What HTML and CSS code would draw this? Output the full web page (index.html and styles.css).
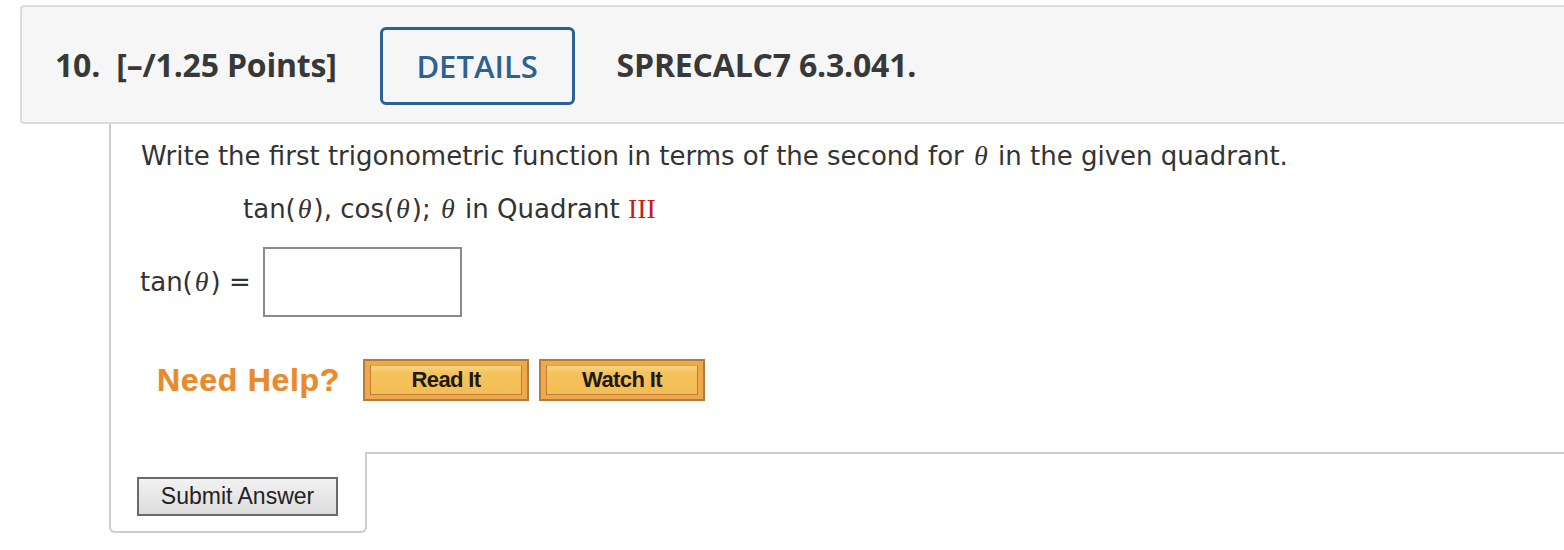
FILE: index.html
```html
<!DOCTYPE html>
<html>
<head>
<meta charset="utf-8">
<link rel="stylesheet" href="styles.css">
</head>
<body>
<div class="header">
  <span class="title">10.&nbsp; [–/1.25 Points]</span>
  <span class="details">DETAILS</span>
  <span class="code">SPRECALC7 6.3.041.</span>
</div>
<div class="content">
  <div class="body">
    <p class="question">Write the first trigonometric function in terms of the second for <i class="math">θ</i> in the given quadrant.</p>
    <p class="given">tan(<i class="math">θ</i>), cos(<i class="math">θ</i>); <i class="math">θ</i> in Quadrant <span class="roman">III</span></p>
    <div class="answer">
      <span class="label">tan(<i class="math">θ</i>) <span class="eq">=</span></span>
      <span class="input"></span>
    </div>
    <div class="help">
      <span class="need">Need Help?</span>
      <span class="hbtn"><span class="hin">Read It</span></span>
      <span class="hbtn"><span class="hin">Watch It</span></span>
    </div>
  </div>
  <div class="footer">
    <div class="submit-cell"><span class="submit">Submit Answer</span></div>
    <div class="rest"></div>
  </div>
</div>
</body>
</html>
```
FILE: styles.css
```css
html, body {
  margin: 0;
  padding: 0;
  background: #fff;
}
body {
  font-family: "Open Sans", "Noto Sans", sans-serif;
  color: #333;
  overflow: hidden;
}
.header {
  margin: 5px 0 0 20px;
  box-sizing: border-box;
  height: 119px;
  border: 2px solid #dcdcdc;
  border-right: none;
  border-radius: 4px 0 0 4px;
  background: #f6f6f6;
  display: flex;
  align-items: center;
  padding-left: 33px;
}
.title {
  font-size: 32px;
  font-weight: 700;
  color: #383838;
  letter-spacing: -0.2px;
}
.details {
  margin-left: 43px;
  width: 195px;
  height: 78px;
  box-sizing: border-box;
  border: 3px solid #2c6195;
  border-radius: 6px;
  display: flex;
  align-items: center;
  justify-content: center;
  font-size: 31px;
  font-weight: 600;
  color: #2c6195;
  background: #f6f6f6;
  margin-top: 2px;
}
.code {
  margin-left: 42px;
  font-size: 32px;
  font-weight: 700;
  color: #383838;
  letter-spacing: -0.2px;
}
.content {
  margin-left: 109px;
}
.body {
  border-left: 2px solid #cccccc;
  padding: 12px 0 51px 30px;
  font-family: "DejaVu Sans", Verdana, sans-serif;
}
p {
  margin: 0;
}
.question {
  font-size: 26px;
  line-height: 40px;
}
.given {
  font-size: 26px;
  line-height: 40px;
  margin-top: 13px;
  padding-left: 102px;
}
.math {
  font-family: "Liberation Serif", "DejaVu Serif", serif;
  font-style: italic;
  font-size: 28px;
  padding: 0 2px;
}
.roman {
  font-family: "Liberation Serif", "DejaVu Serif", serif;
  color: #cc1a1a;
  font-size: 28px;
}
.answer {
  display: flex;
  align-items: center;
  margin-top: 18px;
  font-size: 26px;
}
.answer .label {
  margin-left: -1px;
}
.input {
  width: 199px;
  height: 70px;
  box-sizing: border-box;
  border: 2px solid #8a8a8a;
  background: #fff;
  margin-left: 12px;
}
.help {
  display: flex;
  align-items: center;
  margin-top: 42px;
  padding-left: 16px;
}
.need {
  font-family: "Liberation Sans", Arial, sans-serif;
  font-weight: 700;
  font-size: 32px;
  color: #e88a2e;
  text-shadow: 0 0 1px rgba(232, 138, 46, 0.6);
  margin-right: 23px;
  letter-spacing: 0.7px;
}
.hbtn {
  width: 166px;
  height: 42px;
  box-sizing: border-box;
  border: 2px solid #b57a3c;
  background: #f0a94a;
  padding: 4px 5px;
  margin-right: 10px;
  display: flex;
}
.hin {
  flex: 1;
  border: 1px solid #c07e3a;
  border-top-color: #d5a060;
  background: linear-gradient(#f8d585 0%, #f4c25c 25%, #f3bd55 100%);
  display: flex;
  align-items: center;
  justify-content: center;
  font-family: "Liberation Sans", Arial, sans-serif;
  font-weight: 700;
  font-size: 22px;
  color: #1f1a10;
  letter-spacing: -0.6px;
}
.footer {
  display: flex;
}
.submit-cell {
  width: 258px;
  height: 81px;
  box-sizing: border-box;
  border: 2px solid #cccccc;
  border-top: none;
  border-radius: 0 0 6px 6px;
  padding: 25px 0 0 26px;
}
.rest {
  flex: 1;
  border-top: 2px solid #cccccc;
}
.submit {
  display: inline-flex;
  align-items: center;
  justify-content: center;
  width: 201px;
  height: 39px;
  box-sizing: border-box;
  border: 2px solid #6a6a6a;
  background: linear-gradient(#f2f2f2, #dcdcdc);
  font-family: "Liberation Sans", Arial, sans-serif;
  font-size: 23px;
  color: #222;
}
```
